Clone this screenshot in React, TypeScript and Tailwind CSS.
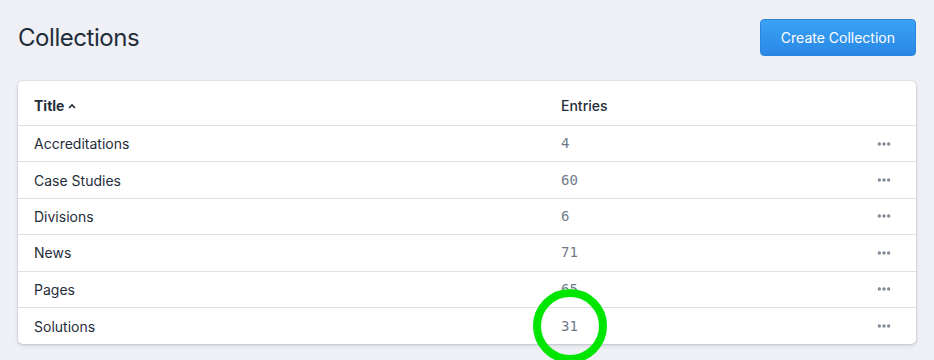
import { MoreHorizontal } from 'lucide-react';

const collections = [
  { title: 'Accreditations', entries: 4 },
  { title: 'Case Studies', entries: 60 },
  { title: 'Divisions', entries: 6 },
  { title: 'News', entries: 71 },
  { title: 'Pages', entries: 65 },
  { title: 'Solutions', entries: 31 },
];

function SortUp() {
  return (
    <svg width="8" height="6" viewBox="0 0 8 6" className="ml-1 mt-[2px]">
      <path d="M1 5 L4 2 L7 5" fill="none" stroke="currentColor" strokeWidth="1.6" />
    </svg>
  );
}

export default function App() {
  return (
    <div className="relative min-h-[360px] bg-[#eef0f5] px-[18px] pt-[19px] pb-4 font-['Inter','Noto_Sans',sans-serif] text-[#1f2d3a]">
      <div className="flex items-center justify-between">
        <h1 className="text-[24px] font-normal leading-[37px] tracking-[-0.45px]">Collections</h1>
        <button className="h-[37px] rounded-[4px] border border-[#2b85db] bg-gradient-to-b from-[#3aa2f6] to-[#2a88e5] px-5 text-[14px] text-white">
          Create Collection
        </button>
      </div>

      <div className="mt-[25px] overflow-hidden rounded-[5px] bg-white shadow-[0_0_0_1px_rgba(49,49,93,0.05),0_2px_5px_0_rgba(49,49,93,0.08),0_1px_3px_0_rgba(0,0,0,0.1)]">
        <div className="flex h-[45px] items-center border-b border-[#dde1e6] px-4 pt-[4px] text-[14px] font-semibold">
          <div className="flex w-[527px] items-center font-bold">
            Title
            <SortUp />
          </div>
          <div className="flex-1 font-medium">Entries</div>
        </div>
        {collections.map((c, i) => (
          <div
            key={c.title}
            className={`flex h-[36.4px] items-center px-4 text-[14px] ${i < collections.length - 1 ? 'border-b border-[#dde1e6]' : ''}`}
          >
            <div className="w-[527px]">{c.title}</div>
            <div className="flex-1 font-['DejaVu_Sans_Mono',monospace] text-[14px] text-[#6f7b88]">{c.entries}</div>
            <MoreHorizontal className="mr-[8px] h-[16px] w-[16px] text-[#7a8592]" strokeWidth={3} />
          </div>
        ))}
      </div>

      <div className="pointer-events-none absolute left-[533px] top-[289px] h-[74px] w-[74px] rounded-full border-[8px] border-[#00e600]" />
    </div>
  );
}
